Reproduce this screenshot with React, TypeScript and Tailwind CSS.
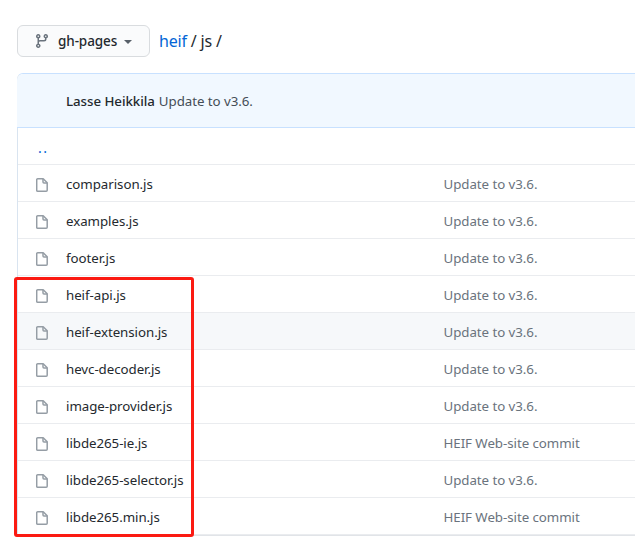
import React from "react";

const rows: [string, string, boolean?][] = [
  ["comparison.js", "Update to v3.6."],
  ["examples.js", "Update to v3.6."],
  ["footer.js", "Update to v3.6."],
  ["heif-api.js", "Update to v3.6."],
  ["heif-extension.js", "Update to v3.6.", true],
  ["hevc-decoder.js", "Update to v3.6."],
  ["image-provider.js", "Update to v3.6."],
  ["libde265-ie.js", "HEIF Web-site commit"],
  ["libde265-selector.js", "Update to v3.6."],
  ["libde265.min.js", "HEIF Web-site commit"],
];

function FileIcon() {
  return (
    <svg width="12" height="14" viewBox="0 0 12 14" fill="none" stroke="#959da5" strokeWidth="1.5" strokeLinejoin="round" className="shrink-0 mt-[1px]">
      <path d="M1.7.8h5.5L11.2 4.8v7.4a1 1 0 01-1 1H1.7a1 1 0 01-1-1V1.8a1 1 0 011-1z" />
      <path d="M7 .9v3a1 1 0 001 1h3.1" />
    </svg>
  );
}

function BranchIcon() {
  return (
    <svg width="16" height="16" viewBox="0 0 16 16" fill="#6a737d" className="shrink-0">
      <path
        fillRule="evenodd"
        d="M11.75 2.5a.75.75 0 100 1.5.75.75 0 000-1.5zm-2.25.75a2.25 2.25 0 113 2.122V6A2.5 2.5 0 0110 8.5H6a1 1 0 00-1 1v1.128a2.251 2.251 0 11-1.5 0V5.372a2.25 2.25 0 111.5 0v1.836A2.492 2.492 0 016 7h4a1 1 0 001-1v-.628A2.25 2.25 0 019.5 3.25zM4.25 12a.75.75 0 100 1.5.75.75 0 000-1.5zM3.5 3.25a.75.75 0 111.5 0 .75.75 0 01-1.5 0z"
      />
    </svg>
  );
}

export default function App() {
  return (
    <div className="relative w-[635px] h-[554px] overflow-hidden bg-white font-['Noto_Sans',sans-serif] text-[14px] leading-[21px] text-[#24292e]">
      <div className="flex items-center pl-[17px] pt-[25px] h-[73px] pb-[16px]">
        <div className="flex items-center w-[133px] h-[32px] rounded-md border border-[#d9dcdf] bg-[#fafbfc] pl-[16px]">
          <BranchIcon />
          <span className="ml-[8px] font-medium text-[13.5px] tracking-[-0.1px]">gh-pages</span>
          <span className="ml-[7px] w-0 h-0 border-x-[4px] border-x-transparent border-t-[4px] border-t-[#586069] mt-[2px]" />
        </div>
        <div className="ml-[9px] text-[16px] tracking-[-0.2px] flex gap-[4px]">
          <span className="text-[#0366d6]">heif</span>
          <span>/</span>
          <span>js</span>
          <span>/</span>
        </div>
      </div>

      <div className="ml-[17px] w-[700px] rounded-t-md border border-[#e1e4e8] border-t-[#c8e1ff] border-x-[#d9e4f0]">
        <div className="flex items-center h-[54px] -mx-px pl-[49px] pt-[2px] bg-[#f1f8ff] border-b border-[#c8e1ff] rounded-t-md text-[13.3px] tracking-[-0.05px]">
          <span className="font-medium">Lasse Heikkila</span>
          <span className="ml-[4px] text-[#444d56]">Update to v3.6.</span>
        </div>
        <div className="flex items-start h-[37px] border-b border-[#eaecef] pl-[20px] pt-[9px] text-[#0366d6] tracking-[1.5px]">
          ..
        </div>
        {rows.map(([name, msg, hover]) => (
          <div
            key={name}
            className={`flex items-center h-[37px] border-b border-[#eaecef] pl-[18px] pt-[2px] ${hover ? "bg-[#f6f8fa]" : ""}`}
          >
            <FileIcon />
            <span className="ml-[18px] w-[377.5px] text-[13.3px] tracking-[-0.05px]">{name}</span>
            <span className="text-[13.3px] tracking-[-0.05px] text-[#6a737d]">{msg}</span>
          </div>
        ))}
      </div>

      <div className="absolute left-[14px] top-[277px] w-[180px] h-[260px] rounded-[3px] border-[3px] border-[#fb1a12]" />
    </div>
  );
}
